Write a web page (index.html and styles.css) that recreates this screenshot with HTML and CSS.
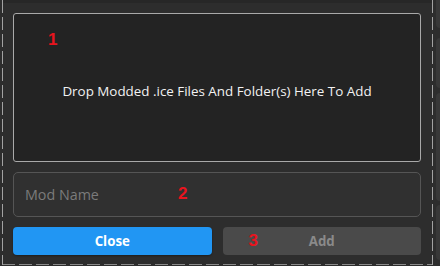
FILE: index.html
```html
<!DOCTYPE html>
<html>
<head>
<meta charset="utf-8">
<link rel="stylesheet" href="styles.css">
</head>
<body>
<div class="page">
  <div class="frame">
    <div class="topband"></div>
    <div class="content">
      <div class="dropzone">
        <span class="dz-text">Drop Modded .ice Files And Folder(s) Here To Add</span>
        <span class="marker m1">1</span>
      </div>
      <div class="input">
        <span class="placeholder">Mod Name</span>
        <span class="marker m2">2</span>
      </div>
      <div class="buttons">
        <div class="btn btn-close">Close</div>
        <div class="btn btn-add">Add<span class="marker m3">3</span></div>
      </div>
    </div>
  </div>
  <div class="side">
    <div class="tab t1"></div>
    <div class="tab t2"></div>
    <div class="tab t3"></div>
    <div class="tab t4"></div>
  </div>
</div>
</body>
</html>
```
FILE: styles.css
```css
html, body {
  margin: 0;
  padding: 0;
  width: 440px;
  height: 266px;
  overflow: hidden;
  background: #2d2d2d;
  font-family: "Open Sans", "Noto Sans", sans-serif;
}
.page {
  display: flex;
  height: 266px;
}
.frame {
  position: relative;
  margin-left: 2px;
  width: 431px;
  height: 265px;
  box-sizing: border-box;
  background-image:
    repeating-linear-gradient(to bottom, #a2a2a2 0 13px, transparent 13px 17px),
    repeating-linear-gradient(to bottom, #a2a2a2 0 13px, transparent 13px 17px),
    repeating-linear-gradient(to right, #8a8a8a 0 13px, transparent 13px 17px);
  background-size: 1px 100%, 1px 100%, 100% 1px;
  background-position: left top, right top, left bottom;
  background-repeat: no-repeat;
}
.topband {
  height: 3px;
  margin: 0 1px;
  background: #272727;
}
.content {
  display: flex;
  flex-direction: column;
  gap: 10px;
  padding: 10px 12px 0 11px;
}
.dropzone {
  position: relative;
  height: 149px;
  box-sizing: border-box;
  border: 1px solid #a9a9a9;
  border-radius: 3px;
  background: #232323;
  display: flex;
  align-items: center;
  justify-content: center;
  padding-top: 6px;
  color: #f2f2f2;
  font-size: 13.4px;
}
.input {
  position: relative;
  height: 45px;
  box-sizing: border-box;
  border: 1px solid #555555;
  border-radius: 5px;
  background: #303030;
  display: flex;
  align-items: center;
  padding-left: 11px;
  padding-bottom: 1px;
}
.placeholder {
  color: #7b7b7b;
  font-size: 14.3px;
}
.buttons {
  display: flex;
  gap: 11px;
}
.btn {
  position: relative;
  flex: 1;
  height: 28px;
  border-radius: 4px;
  display: flex;
  align-items: center;
  justify-content: center;
  font-weight: bold;
  font-size: 13.3px;
}
.btn-close {
  background: #2196f3;
  color: #ffffff;
  box-shadow: 0 1px 2px rgba(0,0,0,0.35);
}
.btn-add {
  background: #4a4a4a;
  color: #8a8a8a;
}
.marker {
  position: absolute;
  color: #e8141e;
  font-weight: bold;
  font-size: 17px;
  line-height: 16px;
  font-family: "Liberation Sans", "Open Sans", sans-serif;
}
.m1 { left: 34px; top: 18px; }
.m2 { left: 164px; top: 13px; }
.m3 { left: 26px; top: 6px; }
.side {
  position: relative;
  flex: 1;
}
.tab {
  position: absolute;
  left: 3px;
  width: 12px;
  background: #383838;
  border-radius: 4px;
}
.t1 { top: -6px; height: 34px; }
.t2 { top: 38px; height: 50px; }
.t3 { top: 93px; height: 108px; }
.t4 { top: 205px; height: 55px; }
```
